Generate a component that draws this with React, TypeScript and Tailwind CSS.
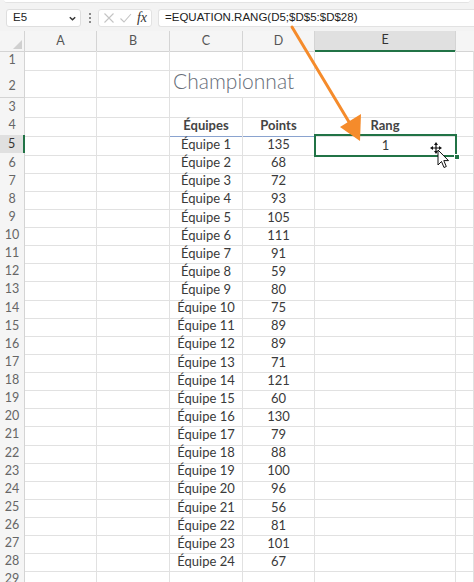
import React from 'react';

const points = [135, 68, 72, 93, 105, 111, 91, 59, 80, 75, 89, 89, 71, 121, 60, 130, 79, 88, 100, 96, 56, 81, 101, 67];

const cols = 'grid grid-cols-[25px_72px_73px_73px_72px_141px_1fr]';
const cell = 'border-r border-b border-[#e1e1e1]';
const rowHead = 'flex items-center justify-center border-r border-b border-[#d4d4d4] bg-[#f5f5f5] text-[12.5px] text-[#666]';

function Cursor() {
  return (
    <svg width="22" height="30" viewBox="0 0 22 30" className="absolute left-[115px] top-[6px]">
      {/* move cross */}
      <path d="M6 1 L8 4 L4 4 Z M6 13 L8 10 L4 10 Z M0 7 L3 5 L3 9 Z M12 7 L9 5 L9 9 Z" fill="#111" />
      <path d="M6 3 V11 M2 7 H10" stroke="#111" strokeWidth="1.2" />
      {/* pointer */}
      <path d="M8 9 L8 24 L11.5 20.5 L14 26.5 L16.3 25.5 L13.8 19.6 L18.5 19.6 Z" fill="#fff" stroke="#111" strokeWidth="1" strokeLinejoin="round" />
    </svg>
  );
}

function DataRow({ n, team, pts }: { n: number; team: string; pts: string }) {
  return (
    <div className={`${cols} h-[18.125px]`}>
      <div className={rowHead}>{n}</div>
      <div className={cell} />
      <div className={cell} />
      <div className={`${cell} flex items-center justify-center`}>{team}</div>
      <div className={`${cell} flex items-center justify-center`}>{pts}</div>
      <div className={cell} />
      <div className={cell} />
    </div>
  );
}

export default function App() {
  return (
    <div className="relative w-[474px] h-[582px] overflow-hidden bg-white font-['Lato',sans-serif] text-[13px] text-[#3a3a3a]">
      {/* ribbon edge */}
      <div className="h-[5px] bg-[#f3f3f3] px-[4px]">
        <div className="h-[3px] rounded-b-md bg-white border-b border-[#e3e3e3]" />
      </div>

      {/* formula bar */}
      <div className="flex h-[26px] items-center bg-[#f3f3f3] pl-[6px] font-['Liberation_Sans',sans-serif] text-[11.5px] text-[#222]">
        <div className="flex h-[18px] w-[75px] items-center justify-between rounded-[3px] border border-[#dedede] bg-white pl-[6px] pr-[3px]">
          <span>E5</span>
          <svg width="9" height="9" viewBox="0 0 10 10">
            <path d="M2 3.5 L5 6.5 L8 3.5" fill="none" stroke="#333" strokeWidth="1.6" />
          </svg>
        </div>
        <div className="flex w-[17px] flex-col items-center justify-center gap-[2px]">
          <span className="h-[2px] w-[2px] rounded-full bg-[#666]" />
          <span className="h-[2px] w-[2px] rounded-full bg-[#666]" />
          <span className="h-[2px] w-[2px] rounded-full bg-[#666]" />
        </div>
        <div className="flex h-[18px] w-[54px] items-center justify-between rounded-[3px] border border-[#e2e2e2] bg-white px-[4px]">
          <svg width="12" height="12" viewBox="0 0 12 12">
            <path d="M1.5 1.5 L10.5 10.5 M10.5 1.5 L1.5 10.5" stroke="#c4c4c4" strokeWidth="1.1" />
          </svg>
          <svg width="13" height="12" viewBox="0 0 13 12">
            <path d="M1.5 6.5 L5 10 L12 2" fill="none" stroke="#c4c4c4" strokeWidth="1.1" />
          </svg>
          <span className="font-['Liberation_Serif',serif] text-[14px] italic leading-none text-[#333]">fx</span>
        </div>
        <div className="ml-[6px] flex h-[18px] flex-1 items-center rounded-l-[3px] border border-r-0 border-[#e2e2e2] bg-white pl-[6px]">
          =EQUATION.RANG(D5;$D$5:$D$28)
        </div>
      </div>

      {/* column headers */}
      <div className={`${cols} h-[20px] text-[12.5px] text-[#555]`}>
        <div className="relative border-r border-b border-[#d4d4d4] bg-[#f5f5f5]">
          <svg width="9" height="9" className="absolute right-[2px] bottom-[2px]" viewBox="0 0 9 9">
            <path d="M9 0 L9 9 L0 9 Z" fill="#d0d0d0" />
          </svg>
        </div>
        {['A', 'B', 'C', 'D'].map((c) => (
          <div key={c} className="flex items-center justify-center border-r border-b border-[#d4d4d4] bg-[#f5f5f5]">
            {c}
          </div>
        ))}
        <div className="flex items-center justify-center border-r border-b-2 border-r-[#d4d4d4] border-b-[#217346] bg-[#e0e0e0] text-[#333]">E</div>
        <div className="border-b border-[#d4d4d4] bg-[#f5f5f5]" />
      </div>

      {/* row 1 */}
      <div className={`${cols} h-[19px]`}>
        <div className={rowHead}>1</div>
        <div className={cell} />
        <div className={cell} />
        <div className={cell} />
        <div className={cell} />
        <div className={cell} />
        <div className={cell} />
      </div>

      {/* row 2 title */}
      <div className={`${cols} h-[28px]`}>
        <div className={`${rowHead} pt-[6px]`}>2</div>
        <div className={cell} />
        <div className={cell} />
        <div className="relative border-b border-[#e1e1e1]">
          <span className="absolute left-[3px] bottom-[1px] whitespace-nowrap text-[21px] font-light text-[#666d78]">Championnat</span>
        </div>
        <div className={cell} />
        <div className={cell} />
        <div className={cell} />
      </div>

      {/* row 3 */}
      <div className={`${cols} h-[18px]`}>
        <div className={rowHead}>3</div>
        <div className={cell} />
        <div className={cell} />
        <div className={cell} />
        <div className={cell} />
        <div className={cell} />
        <div className={cell} />
      </div>

      {/* row 4 headers */}
      <div className={`${cols} h-[19px] font-bold text-[#444]`}>
        <div className={`${rowHead} font-normal`}>4</div>
        <div className={cell} />
        <div className={cell} />
        <div className="flex items-center justify-center border-r border-r-[#e1e1e1] border-b border-b-[#8aa3cf]">Équipes</div>
        <div className="flex items-center justify-center border-r border-r-[#e1e1e1] border-b border-b-[#8aa3cf]">Points</div>
        <div className={`${cell} flex items-center justify-center`}>Rang</div>
        <div className={cell} />
      </div>

      {/* row 5 selected */}
      <div className={`${cols} h-[18.125px]`}>
        <div className="flex items-center justify-center border-r-2 border-b border-r-[#217346] border-b-[#d4d4d4] bg-[#e0e0e0] text-[12.5px] text-[#333]">5</div>
        <div className={cell} />
        <div className={cell} />
        <div className={`${cell} flex items-center justify-center`}>Équipe 1</div>
        <div className={`${cell} flex items-center justify-center`}>135</div>
        <div className="relative flex items-center justify-center">
          <div className="absolute inset-[-1px] border-2 border-[#217346]" />
          <div className="absolute right-[-4px] bottom-[-4px] h-[6px] w-[6px] border border-white bg-[#217346]" />
          <span className="relative">1</span>
          <Cursor />
        </div>
        <div className={cell} />
      </div>

      {points.slice(1).map((p, i) => (
        <DataRow key={i} n={i + 6} team={`Équipe ${i + 2}`} pts={String(p)} />
      ))}
      <DataRow n={29} team="" pts="" />

      {/* orange annotation arrow */}
      <svg width="474" height="582" className="pointer-events-none absolute left-0 top-0">
        <path d="M292 27 L352 127" stroke="#f58b2b" strokeWidth="3" strokeLinecap="round" />
        <path d="M360 141 L340 127 L361 114 Z" fill="#f58b2b" />
      </svg>
    </div>
  );
}
